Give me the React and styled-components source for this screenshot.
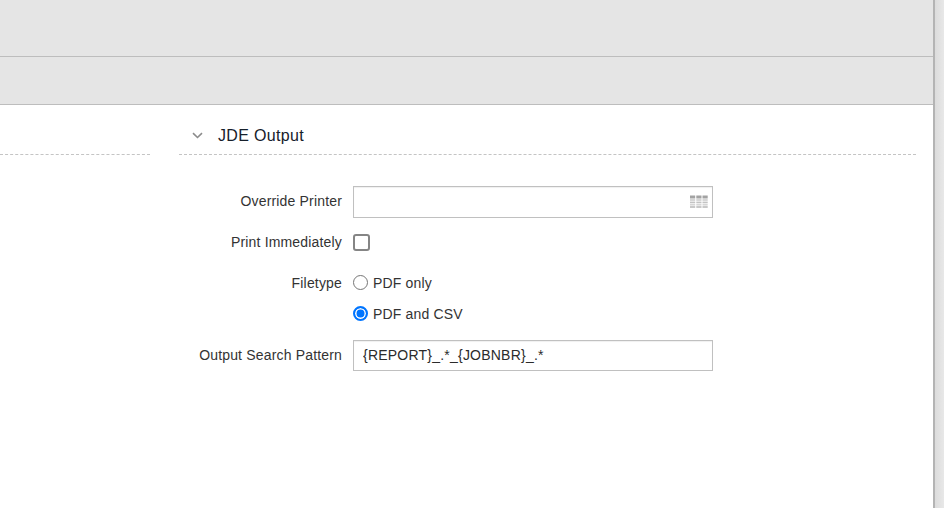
import React from 'react';
import styled, { createGlobalStyle } from 'styled-components';

const GlobalStyle = createGlobalStyle`
  html, body {
    margin: 0;
    padding: 0;
    height: 100%;
    overflow: hidden;
    background: #fff;
  }
  #root {
    height: 100%;
  }
`;

const Page = styled.div`
  display: flex;
  width: 944px;
  height: 508px;
  font-family: 'Liberation Sans', Arial, sans-serif;
  font-size: 14px;
  letter-spacing: 0.17px;
  color: #2b2b2b;
`;

const Main = styled.div`
  width: 933px;
  display: flex;
  flex-direction: column;
`;

const Edge = styled.div`
  width: 11px;
  box-sizing: border-box;
  border-left: solid 2px #b4b4b4;
  background: linear-gradient(to right, #dcdcdc, #e8e8e8);
`;

const Bar = styled.div`
  height: ${({ $height }) => $height}px;
  box-sizing: border-box;
  flex-shrink: 0;
  background: #e5e5e5;
  border-bottom: solid 1px #bdbdbd;
`;

const Columns = styled.div`
  display: flex;
  gap: 29px;
  padding-right: 17px;
`;

const LeftColumn = styled.div`
  width: 150px;
  height: 50px;
  box-sizing: border-box;
  border-bottom: dashed 1px #c4c4c4;
`;

const RightColumn = styled.section`
  flex: 1;
`;

const SectionHeader = styled.div`
  height: 50px;
  box-sizing: border-box;
  border-bottom: dashed 1px #c4c4c4;
  display: flex;
  align-items: center;
  padding-left: 13px;
  padding-top: 12px;
  gap: 15px;
`;

const SectionTitle = styled.h2`
  margin: 0;
  font-size: 16px;
  font-weight: 400;
  letter-spacing: 0.33px;
  color: #16202b;
`;

const Form = styled.div`
  display: flex;
  flex-direction: column;
  padding-top: 31px;
`;

const Row = styled.div`
  display: flex;
  align-items: center;
  gap: 11px;
  height: ${({ $height }) => $height}px;
  margin-bottom: ${({ $gap }) => $gap || 0}px;
`;

const Label = styled.label`
  width: 163px;
  text-align: right;
  color: #333;
  padding-bottom: ${({ $raised }) => ($raised ? 2 : 0)}px;
`;

const InputBox = styled.div`
  position: relative;
  width: 360px;
  height: 100%;
  box-sizing: border-box;
  border: solid 1px #c0c0c0;
  box-shadow: inset 0 1px 1px #f0f0f0;
  background: #fff;
`;

const TextInput = styled.input`
  width: 100%;
  height: 100%;
  box-sizing: border-box;
  border: none;
  outline: none;
  padding: 0 9px 2px;
  font: inherit;
  letter-spacing: 0.22px;
  color: #2b2b2b;
  background: transparent;
`;

const LookupIcon = styled.svg`
  position: absolute;
  top: 8px;
  right: 4px;
`;

const CheckBox = styled.span`
  width: 17px;
  height: 17px;
  box-sizing: border-box;
  border: solid 2px #858585;
  border-radius: 3px;
  background: #fff;
`;

const Radio = styled.span`
  width: 15px;
  height: 15px;
  box-sizing: border-box;
  border-radius: 50%;
  margin-right: -6px;
  border: solid ${({ $checked }) => ($checked ? '2px #0075ff' : '1.5px #767676')};
  box-shadow: ${({ $checked }) => ($checked ? 'inset 0 0 0 1.5px #fff' : 'none')};
  background-color: ${({ $checked }) => ($checked ? '#0075ff' : '#fff')};
`;

const OptionText = styled.span`
  color: #333;
`;

const Chevron = () => (
  <svg width="11" height="7" viewBox="0 0 11 7">
    <path d="M1 1.2 L5.5 5.5 L10 1.2" fill="none" stroke="#8c8c8c" strokeWidth="1.6" />
  </svg>
);

const Lookup = () => (
  <LookupIcon width="18" height="14" viewBox="0 0 18 14">
    {[0, 6.3, 12.5].map((x) => (
      <g key={x}>
        <rect x={x} y="0.5" width="5.2" height="3" fill="#a3a3a3" />
        <rect x={x} y="4" width="5.2" height="2" fill="#d6d6d6" />
        <rect x={x} y="6.6" width="5.2" height="1.6" fill="#c2c2c2" />
        <rect x={x} y="8.8" width="5.2" height="1.8" fill="#d6d6d6" />
        <rect x={x} y="11" width="5.2" height="2" fill="#c8c8c8" />
      </g>
    ))}
  </LookupIcon>
);

const App = () => {
  return (
    <Page>
      <GlobalStyle />
      <Main>
        <Bar $height={57} />
        <Bar $height={48} />
        <Columns>
          <LeftColumn />
          <RightColumn>
            <SectionHeader>
              <Chevron />
              <SectionTitle>JDE Output</SectionTitle>
            </SectionHeader>
            <Form>
              <Row $height={32} $gap={16}>
                <Label $raised>Override Printer</Label>
                <InputBox>
                  <TextInput />
                  <Lookup />
                </InputBox>
              </Row>
              <Row $height={17} $gap={23}>
                <Label $raised>Print Immediately</Label>
                <CheckBox />
              </Row>
              <Row $height={17} $gap={14}>
                <Label>Filetype</Label>
                <Radio />
                <OptionText>PDF only</OptionText>
              </Row>
              <Row $height={17} $gap={18}>
                <Label />
                <Radio $checked />
                <OptionText>PDF and CSV</OptionText>
              </Row>
              <Row $height={31}>
                <Label $raised>Output Search Pattern</Label>
                <InputBox>
                  <TextInput defaultValue="{REPORT}_.*_{JOBNBR}_.*" />
                </InputBox>
              </Row>
            </Form>
          </RightColumn>
        </Columns>
      </Main>
      <Edge />
    </Page>
  );
};

export default App;
